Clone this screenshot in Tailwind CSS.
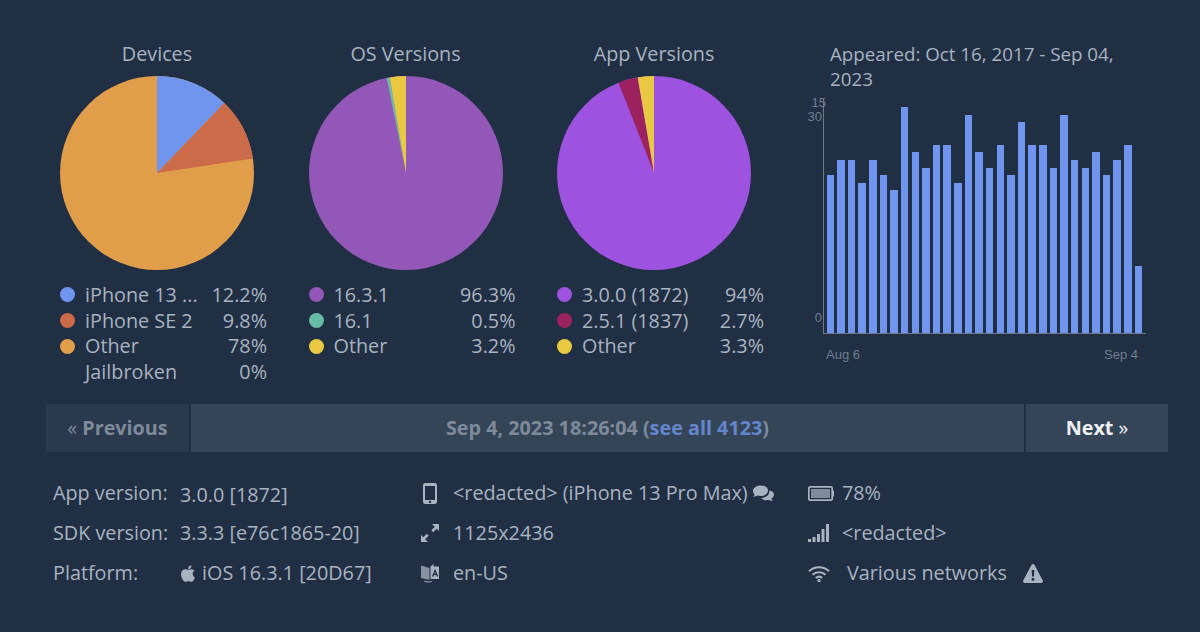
<!DOCTYPE html>
<html lang="en">
<head>
    <meta charset="UTF-8">
    <title>Crash details</title>
    <script src="https://cdn.jsdelivr.net/npm/@tailwindcss/browser@4"></script>
</head>
<body class="bg-[#202f43] font-['Open_Sans',sans-serif] text-[19.8px] text-[#a8b3c1] overflow-hidden">
    <div class="w-[1200px] h-[632px] pl-[46px] pr-[32px] pt-[41px]">
        <!-- Charts -->
        <div class="flex h-[344px] pl-[14px]">
            <!-- Devices -->
            <div class="w-[248.5px] shrink-0">
                <h3 class="w-[194px] text-center leading-[25px]">Devices</h3>
                <svg class="mt-[10px] block" width="194" height="194" viewBox="-97 -97 194 194">
                    <circle r="97" fill="#e19e4a"/>
                    <path d="M0 0V-97A97 97 0 0 1 67.3 -69.9Z" fill="#6f95ee"/>
                    <path d="M0 0L67.3 -69.9A97 97 0 0 1 95.9 -14.5Z" fill="#cc6b49"/>
                </svg>
                <div class="mt-[12px] w-[207px] leading-[25.7px]">
                    <div class="flex items-center"><span class="w-[15px] h-[15px] rounded-full bg-[#6f95ee] mr-[10px]"></span><span class="flex-1">iPhone 13 ...</span><span>12.2%</span></div>
                    <div class="flex items-center"><span class="w-[15px] h-[15px] rounded-full bg-[#cc6b49] mr-[10px]"></span><span class="flex-1">iPhone SE 2</span><span>9.8%</span></div>
                    <div class="flex items-center"><span class="w-[15px] h-[15px] rounded-full bg-[#e19e4a] mr-[10px]"></span><span class="flex-1">Other</span><span>78%</span></div>
                    <div class="flex items-center"><span class="w-[15px] h-[15px] mr-[10px]"></span><span class="flex-1">Jailbroken</span><span>0%</span></div>
                </div>
            </div>
            <!-- OS Versions -->
            <div class="w-[248.5px] shrink-0">
                <h3 class="w-[194px] text-center leading-[25px]">OS Versions</h3>
                <svg class="mt-[10px] block" width="194" height="194" viewBox="-97 -97 194 194">
                    <circle r="97" fill="#9358b7"/>
                    <path d="M0 0L-19.3 -95A97 97 0 0 1 -16.3 -95.6Z" fill="#66bda5"/>
                    <path d="M0 0L-16.3 -95.6A97 97 0 0 1 0 -97Z" fill="#e9c942"/>
                </svg>
                <div class="mt-[12px] w-[207px] leading-[25.7px]">
                    <div class="flex items-center"><span class="w-[15px] h-[15px] rounded-full bg-[#9358b7] mr-[10px]"></span><span class="flex-1">16.3.1</span><span>96.3%</span></div>
                    <div class="flex items-center"><span class="w-[15px] h-[15px] rounded-full bg-[#66bda5] mr-[10px]"></span><span class="flex-1">16.1</span><span>0.5%</span></div>
                    <div class="flex items-center"><span class="w-[15px] h-[15px] rounded-full bg-[#e9c942] mr-[10px]"></span><span class="flex-1">Other</span><span>3.2%</span></div>
                </div>
            </div>
            <!-- App Versions -->
            <div class="w-[273px] shrink-0">
                <h3 class="w-[194px] text-center leading-[25px]">App Versions</h3>
                <svg class="mt-[10px] block" width="194" height="194" viewBox="-97 -97 194 194">
                    <circle r="97" fill="#9d53e0"/>
                    <path d="M0 0L-35.5 -90.3A97 97 0 0 1 -16.3 -95.6Z" fill="#9b215f"/>
                    <path d="M0 0L-16.3 -95.6A97 97 0 0 1 0 -97Z" fill="#e9c942"/>
                </svg>
                <div class="mt-[12px] w-[207px] leading-[25.7px]">
                    <div class="flex items-center"><span class="w-[15px] h-[15px] rounded-full bg-[#9d53e0] mr-[10px]"></span><span class="flex-1">3.0.0 (1872)</span><span>94%</span></div>
                    <div class="flex items-center"><span class="w-[15px] h-[15px] rounded-full bg-[#9b215f] mr-[10px]"></span><span class="flex-1">2.5.1 (1837)</span><span>2.7%</span></div>
                    <div class="flex items-center"><span class="w-[15px] h-[15px] rounded-full bg-[#e9c942] mr-[10px]"></span><span class="flex-1">Other</span><span>3.3%</span></div>
                </div>
            </div>
            <!-- Appeared -->
            <div class="w-[320px] shrink-0">
                <h3 class="text-[18.75px] leading-[25px]">Appeared: Oct 16, 2017 - Sep 04, 2023</h3>
                <div class="relative mt-[7px] -ml-[7px] w-[323px] h-[236px] border-l border-b border-[#6b7a8d]">
                    <span class="absolute right-full top-[-3px] font-['Liberation_Sans',sans-serif] text-[13px] leading-[15px] text-[#6f7d8f] translate-x-[2px]">15</span>
                    <span class="absolute right-full top-[11px] font-['Liberation_Sans',sans-serif] text-[13px] leading-[15px] text-[#6f7d8f] mr-[2px]">30</span>
                    <span class="absolute right-full bottom-[8px] font-['Liberation_Sans',sans-serif] text-[13px] leading-[15px] text-[#6f7d8f] mr-[2px]">0</span>
                    <div id="bars" class="flex items-end gap-[3.13px] h-full pl-[2.5px]"></div>
                </div>
                <div class="-ml-[4px] w-[312px] mt-[13px] flex justify-between font-['Liberation_Sans',sans-serif] text-[13px] leading-[15px] text-[#6f7d8f]">
                    <span>Aug 6</span>
                    <span>Sep 4</span>
                </div>
            </div>
        </div>

        <!-- Pager -->
        <div class="mt-[19px] flex h-[48px] gap-[2px] items-stretch leading-[48px] font-bold">
            <div class="w-[143px] bg-[#2a394d] text-[#7d8a9a] text-center"><span class="font-normal">«</span> Previous</div>
            <div class="flex-1 bg-[#354558] text-[#7d8a9a] text-center">Sep 4, 2023 18:26:04 (<span class="text-[#6486cc]">see all 4123</span>)</div>
            <div class="w-[142px] bg-[#354558] text-[#eef1f5] text-center">Next <span class="font-normal">»</span></div>
        </div>

        <!-- Details -->
        <div class="mt-[21px] flex">
            <div class="w-[375px] pl-[7px] shrink-0">
                <div class="flex items-center h-[40px]"><span class="w-[127px]">App version:</span><span class="pt-[3px]">3.0.0 [1872]</span></div>
                <div class="flex items-center h-[40px]"><span class="w-[127px]">SDK version:</span><span>3.3.3 [e76c1865-20]</span></div>
                <div class="flex items-center h-[40px]"><span class="w-[127px]">Platform:</span>
                    <svg class="w-[16px] h-[19px] mr-[6px]" viewBox="0 0 384 512" fill="currentColor"><path d="M318.7 268.7c-.2-36.7 16.4-64.4 50-84.8-18.8-26.9-47.2-41.7-84.7-44.6-35.5-2.8-74.3 20.7-88.5 20.7-15 0-49.4-19.7-76.4-19.7C63.3 141.2 4 184.8 4 273.5q0 39.3 14.4 81.2c12.8 36.7 59 126.7 107.2 125.2 25.2-.6 43-17.9 75.8-17.9 31.8 0 48.3 17.9 76.4 17.9 48.6-.7 90.4-82.5 102.6-119.3-65.2-30.7-61.7-90-61.7-91.9zm-56.6-164.2c27.3-32.4 24.8-61.9 24-72.5-24.1 1.4-52 16.4-67.9 34.9-17.5 19.8-27.8 44.3-25.6 71.9 26.1 2 49.9-11.4 69.5-34.3z"/></svg>
                    <span>iOS 16.3.1 [20D67]</span></div>
            </div>
            <div class="w-[387px] shrink-0">
                <div class="flex items-center h-[40px]">
                    <span class="w-[18px] mr-[14px] flex justify-center">
                        <svg class="w-[14px] h-[21px]" viewBox="0 0 14 21" fill="currentColor"><path fill-rule="evenodd" d="M2.5 0h9A2.5 2.5 0 0 1 14 2.5v16a2.5 2.5 0 0 1-2.5 2.5h-9A2.5 2.5 0 0 1 0 18.500v-16A2.500 2.500 0 0 1 2.500 0zM2 3v14h10V3zM7 17.700a1.200 1.200 0 1 0 0 2.400 1.200 1.200 0 0 0 0-2.400z"/></svg>
                    </span>
                    <span>&lt;redacted&gt; (iPhone 13 Pro Max)</span>
                    <svg class="w-[21px] h-[16px] ml-[5px]" viewBox="0 0 21 16" fill="currentColor"><path d="M7.500 0.500C3.400 0.500 0 2.900 0 6c0 1.300.6 2.500 1.600 3.400C1.200 10.400.5 11.200.4 11.300c-.2.200 0 .5.200.5 1.500 0 2.900-.6 3.700-1.200.9.300 2.000.5 3.200.5 4.100 0 7.500-2.400 7.500-5.600S11.600.500 7.500.500z"/><path d="M16.400 5.200c.1.300.1.600.1.800 0 4-3.900 6.800-8.400 7.100 1.100 1.300 3 2.100 5.100 2.100.9 0 1.700-.1 2.500-.4.700.6 2.100 1.200 3.600 1.200.2 0 .4-.3.200-.5-.1-.1-.8-.9-1.200-1.900 1.700-1 2.700-2.500 2.700-4 0-1.900-1.700-3.500-4.600-4.400z"/></svg>
                </div>
                <div class="flex items-center h-[40px]">
                    <span class="w-[18px] mr-[14px] flex justify-center">
                        <svg class="w-[18px] h-[18px]" viewBox="0 0 18 18" fill="currentColor"><path d="M11 0h6.500a.5.5 0 0 1 .5.500V7l-2.300-2.300-3.500 3.500-1.900-1.900 3.500-3.500zM7 18H.5a.5.5 0 0 1-.5-.5V11l2.300 2.300 3.500-3.500 1.900 1.900-3.500 3.500z"/></svg>
                    </span>
                    <span>1125x2436</span>
                </div>
                <div class="flex items-center h-[40px]">
                    <span class="w-[18px] mr-[14px] flex justify-center">
                        <svg class="w-[18px] h-[20px]" viewBox="0 0 18 20" fill="currentColor"><path d="M0 2.500 8.500 5v12L0 15z" opacity=".75"/><path fill-rule="evenodd" d="M9.500 3.500 12.500 1v2.500H18V16H9.500zM13.700 6.500 11 13.500h1.500l.5-1.400h2.200l.5 1.400h1.500l-2.700-7zM14.100 8.700l.7 2.100h-1.400z"/><path d="M3 18.500c2.500 1.300 6 1.300 8 .2l-.3-.8c-1.800.8-4.700.8-7.200-.1z"/></svg>
                    </span>
                    <span>en-US</span>
                </div>
            </div>
            <div>
                <div class="flex items-center h-[40px]">
                    <svg class="w-[26px] h-[15px] mr-[8px]" viewBox="0 0 26 15" fill="currentColor"><path fill-rule="evenodd" d="M2 0h21a2 2 0 0 1 2 2v2.500h1v6h-1V13a2 2 0 0 1-2 2H2a2 2 0 0 1-2-2V2a2 2 0 0 1 2-2zM1.700 1.700v11.600h21.600V1.700z"/><rect x="3" y="3" width="19" height="9" opacity=".7"/></svg>
                    <span>78%</span>
                </div>
                <div class="flex items-center h-[40px]">
                    <svg class="w-[22px] h-[18px] mr-[12px]" viewBox="0 0 22 18" fill="currentColor"><rect x="0" y="15" width="3" height="3"/><rect x="4.500" y="13" width="3" height="5"/><rect x="9" y="10" width="3" height="8"/><rect x="13.500" y="5" width="3" height="13" /><rect x="18" y="0" width="3" height="18"/></svg>
                    <span>&lt;redacted&gt;</span>
                </div>
                <div class="flex items-center h-[40px]">
                    <svg class="w-[22px] h-[17px] mr-[17px]" viewBox="0 0 22 17" fill="none" stroke="currentColor" stroke-width="2.200"><path d="M1 6.200C6.600.900 15.400.900 21 6.200"/><path d="M4.500 9.700c3.600-3.300 9.400-3.300 13 0"/><path d="M7.800 13c1.800-1.500 4.600-1.500 6.400 0"/><circle cx="11" cy="15.500" r=".6" fill="currentColor"/></svg>
                    <span>Various networks</span>
                    <svg class="w-[20px] h-[19px] ml-[16px]" viewBox="0 0 20 19" fill="currentColor"><path fill-rule="evenodd" d="M10 0c.6 0 1.100.3 1.400.8l8.400 15.800c.5 1-.2 2.400-1.400 2.400H1.600C.4 19-.3 17.600.2 16.600L8.600.8C8.900.3 9.400 0 10 0zM8.700 6l.3 6.500h2l.3-6.500zM10 13.700a1.500 1.500 0 1 0 0 3 1.500 1.500 0 0 0 0-3z"/></svg>
                </div>
            </div>
        </div>
    </div>

    <script>
        // bar heights in px, one bar per day
        const days = [158,173,173,150,173,158,143,226,181,165,188,188,150,218,181,165,188,158,211,188,188,165,218,173,165,181,158,173,188,67];
        const bars = document.getElementById('bars');
        days.forEach(h => {
            const bar = document.createElement('div');
            bar.className = 'w-[7.5px] shrink-0 bg-[#6f95ee]';
            bar.style.height = h + 'px';
            bars.appendChild(bar);
        });
    </script>
</body>
</html>
